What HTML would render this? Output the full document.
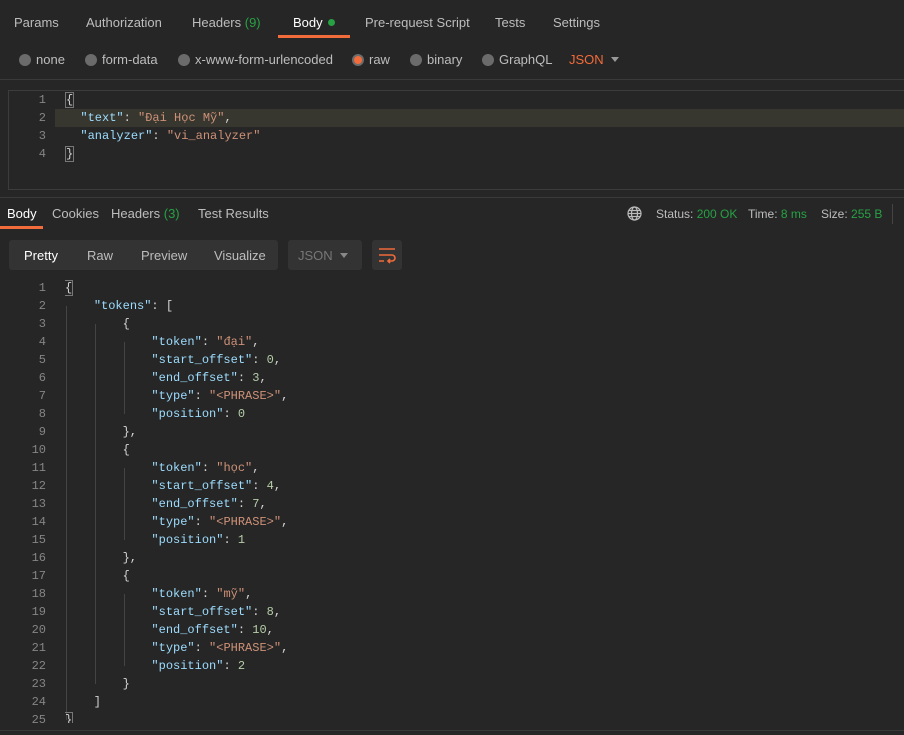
<!DOCTYPE html>
<html><head><meta charset="utf-8"><style>
*{margin:0;padding:0;box-sizing:border-box}
body{width:904px;height:735px;background:#262626;color:#bdbdbd;font-family:"Liberation Sans",sans-serif;font-size:13px;position:relative;overflow:hidden}
.a{position:absolute;white-space:nowrap}
.g{color:#26a244}
.code{font-family:"Liberation Mono",monospace;font-size:12px;line-height:18px}
.k{color:#9cdcfe}.s{color:#ce9178}.n{color:#b5cea8}.p{color:#d4d4d4}
.ln{position:absolute;width:30px;text-align:right;color:#858585;font-family:"Liberation Mono",monospace;font-size:12px;line-height:18px}
.rad{display:inline-block;width:12px;height:12px;border-radius:50%;background:#6b6b6b;vertical-align:-2px;margin-right:5px}
.guide{position:absolute;width:1px;background:#444}
</style></head><body>
<div class="a" style="top:15px;left:14px">Params</div>
<div class="a" style="top:15px;left:86px">Authorization</div>
<div class="a" style="top:15px;left:192px">Headers <span class="g">(9)</span></div>
<div class="a" style="top:15px;left:293px;color:#fff">Body <span style="display:inline-block;width:7px;height:7px;border-radius:50%;background:#26a244;vertical-align:1px;margin-left:2px"></span></div>
<div class="a" style="top:35px;left:278px;width:72px;height:3px;background:#f26b3a"></div>
<div class="a" style="top:15px;left:365px">Pre-request Script</div>
<div class="a" style="top:15px;left:495px">Tests</div>
<div class="a" style="top:15px;left:553px">Settings</div>
<div class="a" style="top:52px;left:19px"><span class="rad"></span>none</div>
<div class="a" style="top:52px;left:85px"><span class="rad"></span>form-data</div>
<div class="a" style="top:52px;left:178px"><span class="rad"></span>x-www-form-urlencoded</div>
<div class="a" style="top:52px;left:352px"><span class="rad" style="background:#f26b3a;border:2px solid #6b6b6b"></span>raw</div>
<div class="a" style="top:52px;left:410px"><span class="rad"></span>binary</div>
<div class="a" style="top:52px;left:482px"><span class="rad"></span>GraphQL</div>
<div class="a" style="top:52px;left:569px;color:#f26b3a">JSON</div>
<div class="a" style="top:57px;left:611px;width:0;height:0;border-left:4px solid transparent;border-right:4px solid transparent;border-top:5px solid #999"></div>
<div class="a" style="top:79px;left:0;width:904px;height:1px;background:#3a3a3a"></div>
<div class="a" style="top:90px;left:8px;width:900px;height:100px;border:1px solid #3c3c3c;border-right:none"></div>
<div class="a" style="top:109px;left:55px;width:849px;height:18px;background:#37372f"></div>
<div class="ln" style="top:91px;left:16px">1<br>2<br>3<br>4</div>
<div class="a code" style="top:91px;left:66px"><span class="p" style="outline:1px solid #777">{</span><br>&nbsp;&nbsp;<span class="k">"text"</span><span class="p">: </span><span class="s">"Đại Học Mỹ"</span><span class="p">,</span><br>&nbsp;&nbsp;<span class="k">"analyzer"</span><span class="p">: </span><span class="s">"vi_analyzer"</span><br><span class="p" style="outline:1px solid #777">}</span></div>
<div class="a" style="top:197px;left:0;width:904px;height:1px;background:#3a3a3a"></div>
<div class="a" style="top:206px;left:7px;color:#fff">Body</div>
<div class="a" style="top:226px;left:0;width:43px;height:3px;background:#f26b3a"></div>
<div class="a" style="top:206px;left:52px">Cookies</div>
<div class="a" style="top:206px;left:111px">Headers <span class="g">(3)</span></div>
<div class="a" style="top:206px;left:198px">Test Results</div>
<svg class="a" style="top:206px;left:627px" width="15" height="15" viewBox="0 0 15 15" fill="none" stroke="#bbb" stroke-width="1.2"><circle cx="7.5" cy="7.5" r="6.5"/><ellipse cx="7.5" cy="7.5" rx="3" ry="6.5"/><path d="M1 7.5h13M2 4.5h11M2 10.5h11"/></svg>
<div class="a" style="top:207px;left:656px;font-size:12px">Status: <span class="g">200 OK</span></div>
<div class="a" style="top:207px;left:748px;font-size:12px">Time: <span class="g">8 ms</span></div>
<div class="a" style="top:207px;left:821px;font-size:12px">Size: <span class="g">255 B</span></div>
<div class="a" style="top:204px;left:892px;width:1px;height:20px;background:#444"></div>
<div class="a" style="top:240px;left:9px;width:269px;height:30px;background:#333;border-radius:3px"></div>
<div class="a" style="top:248px;left:24px;color:#fff">Pretty</div>
<div class="a" style="top:248px;left:87px">Raw</div>
<div class="a" style="top:248px;left:141px">Preview</div>
<div class="a" style="top:248px;left:214px">Visualize</div>
<div class="a" style="top:240px;left:288px;width:74px;height:30px;background:#333;border-radius:3px"></div>
<div class="a" style="top:248px;left:298px;color:#777">JSON</div>
<div class="a" style="top:253px;left:340px;width:0;height:0;border-left:4px solid transparent;border-right:4px solid transparent;border-top:5px solid #888"></div>
<div class="a" style="top:240px;left:372px;width:30px;height:30px;background:#333;border-radius:3px"></div>
<svg class="a" style="top:246px;left:377px" width="20" height="18" viewBox="0 0 20 18" fill="none" stroke="#f26b3a" stroke-width="1.6"><path d="M2 3h16M2 9h13a3 3 0 0 1 0 6h-4M2 15h5M13 13l-2 2 2 2"/></svg>
<div class="guide" style="top:306px;left:66px;height:414px"></div>
<div class="guide" style="top:324px;left:95px;height:360px"></div>
<div class="guide" style="top:342px;left:124px;height:72px"></div>
<div class="guide" style="top:468px;left:124px;height:72px"></div>
<div class="guide" style="top:594px;left:124px;height:72px"></div>
<div class="ln" style="top:279px;left:16px;height:444px;overflow:hidden">1<br>2<br>3<br>4<br>5<br>6<br>7<br>8<br>9<br>10<br>11<br>12<br>13<br>14<br>15<br>16<br>17<br>18<br>19<br>20<br>21<br>22<br>23<br>24<br>25</div>
<div class="a code" style="top:279px;left:65px;height:444px;overflow:hidden"><span class="p" style="outline:1px solid #777">{</span><br>&nbsp;&nbsp;&nbsp;&nbsp;<span class="k">"tokens"</span><span class="p">: [</span><br><span class="p">&nbsp;&nbsp;&nbsp;&nbsp;&nbsp;&nbsp;&nbsp;&nbsp;{</span><br>
&nbsp;&nbsp;&nbsp;&nbsp;&nbsp;&nbsp;&nbsp;&nbsp;&nbsp;&nbsp;&nbsp;&nbsp;<span class="k">"token"</span><span class="p">: </span><span class="s">"đại"</span><span class="p">,</span><br>
&nbsp;&nbsp;&nbsp;&nbsp;&nbsp;&nbsp;&nbsp;&nbsp;&nbsp;&nbsp;&nbsp;&nbsp;<span class="k">"start_offset"</span><span class="p">: </span><span class="n">0</span><span class="p">,</span><br>
&nbsp;&nbsp;&nbsp;&nbsp;&nbsp;&nbsp;&nbsp;&nbsp;&nbsp;&nbsp;&nbsp;&nbsp;<span class="k">"end_offset"</span><span class="p">: </span><span class="n">3</span><span class="p">,</span><br>
&nbsp;&nbsp;&nbsp;&nbsp;&nbsp;&nbsp;&nbsp;&nbsp;&nbsp;&nbsp;&nbsp;&nbsp;<span class="k">"type"</span><span class="p">: </span><span class="s">"&lt;PHRASE&gt;"</span><span class="p">,</span><br>
&nbsp;&nbsp;&nbsp;&nbsp;&nbsp;&nbsp;&nbsp;&nbsp;&nbsp;&nbsp;&nbsp;&nbsp;<span class="k">"position"</span><span class="p">: </span><span class="n">0</span><br>
<span class="p">&nbsp;&nbsp;&nbsp;&nbsp;&nbsp;&nbsp;&nbsp;&nbsp;},</span><br><span class="p">&nbsp;&nbsp;&nbsp;&nbsp;&nbsp;&nbsp;&nbsp;&nbsp;{</span><br>
&nbsp;&nbsp;&nbsp;&nbsp;&nbsp;&nbsp;&nbsp;&nbsp;&nbsp;&nbsp;&nbsp;&nbsp;<span class="k">"token"</span><span class="p">: </span><span class="s">"học"</span><span class="p">,</span><br>
&nbsp;&nbsp;&nbsp;&nbsp;&nbsp;&nbsp;&nbsp;&nbsp;&nbsp;&nbsp;&nbsp;&nbsp;<span class="k">"start_offset"</span><span class="p">: </span><span class="n">4</span><span class="p">,</span><br>
&nbsp;&nbsp;&nbsp;&nbsp;&nbsp;&nbsp;&nbsp;&nbsp;&nbsp;&nbsp;&nbsp;&nbsp;<span class="k">"end_offset"</span><span class="p">: </span><span class="n">7</span><span class="p">,</span><br>
&nbsp;&nbsp;&nbsp;&nbsp;&nbsp;&nbsp;&nbsp;&nbsp;&nbsp;&nbsp;&nbsp;&nbsp;<span class="k">"type"</span><span class="p">: </span><span class="s">"&lt;PHRASE&gt;"</span><span class="p">,</span><br>
&nbsp;&nbsp;&nbsp;&nbsp;&nbsp;&nbsp;&nbsp;&nbsp;&nbsp;&nbsp;&nbsp;&nbsp;<span class="k">"position"</span><span class="p">: </span><span class="n">1</span><br>
<span class="p">&nbsp;&nbsp;&nbsp;&nbsp;&nbsp;&nbsp;&nbsp;&nbsp;},</span><br><span class="p">&nbsp;&nbsp;&nbsp;&nbsp;&nbsp;&nbsp;&nbsp;&nbsp;{</span><br>
&nbsp;&nbsp;&nbsp;&nbsp;&nbsp;&nbsp;&nbsp;&nbsp;&nbsp;&nbsp;&nbsp;&nbsp;<span class="k">"token"</span><span class="p">: </span><span class="s">"mỹ"</span><span class="p">,</span><br>
&nbsp;&nbsp;&nbsp;&nbsp;&nbsp;&nbsp;&nbsp;&nbsp;&nbsp;&nbsp;&nbsp;&nbsp;<span class="k">"start_offset"</span><span class="p">: </span><span class="n">8</span><span class="p">,</span><br>
&nbsp;&nbsp;&nbsp;&nbsp;&nbsp;&nbsp;&nbsp;&nbsp;&nbsp;&nbsp;&nbsp;&nbsp;<span class="k">"end_offset"</span><span class="p">: </span><span class="n">10</span><span class="p">,</span><br>
&nbsp;&nbsp;&nbsp;&nbsp;&nbsp;&nbsp;&nbsp;&nbsp;&nbsp;&nbsp;&nbsp;&nbsp;<span class="k">"type"</span><span class="p">: </span><span class="s">"&lt;PHRASE&gt;"</span><span class="p">,</span><br>
&nbsp;&nbsp;&nbsp;&nbsp;&nbsp;&nbsp;&nbsp;&nbsp;&nbsp;&nbsp;&nbsp;&nbsp;<span class="k">"position"</span><span class="p">: </span><span class="n">2</span><br>
<span class="p">&nbsp;&nbsp;&nbsp;&nbsp;&nbsp;&nbsp;&nbsp;&nbsp;}</span><br><span class="p">&nbsp;&nbsp;&nbsp;&nbsp;]</span><br><span class="p" style="outline:1px solid #777">}</span></div>
<div class="a" style="top:723px;left:0;width:904px;height:12px;background:#262626"></div>
<div class="a" style="top:730px;left:0;width:904px;height:1px;background:#3a3a3a"></div>
</body></html>
